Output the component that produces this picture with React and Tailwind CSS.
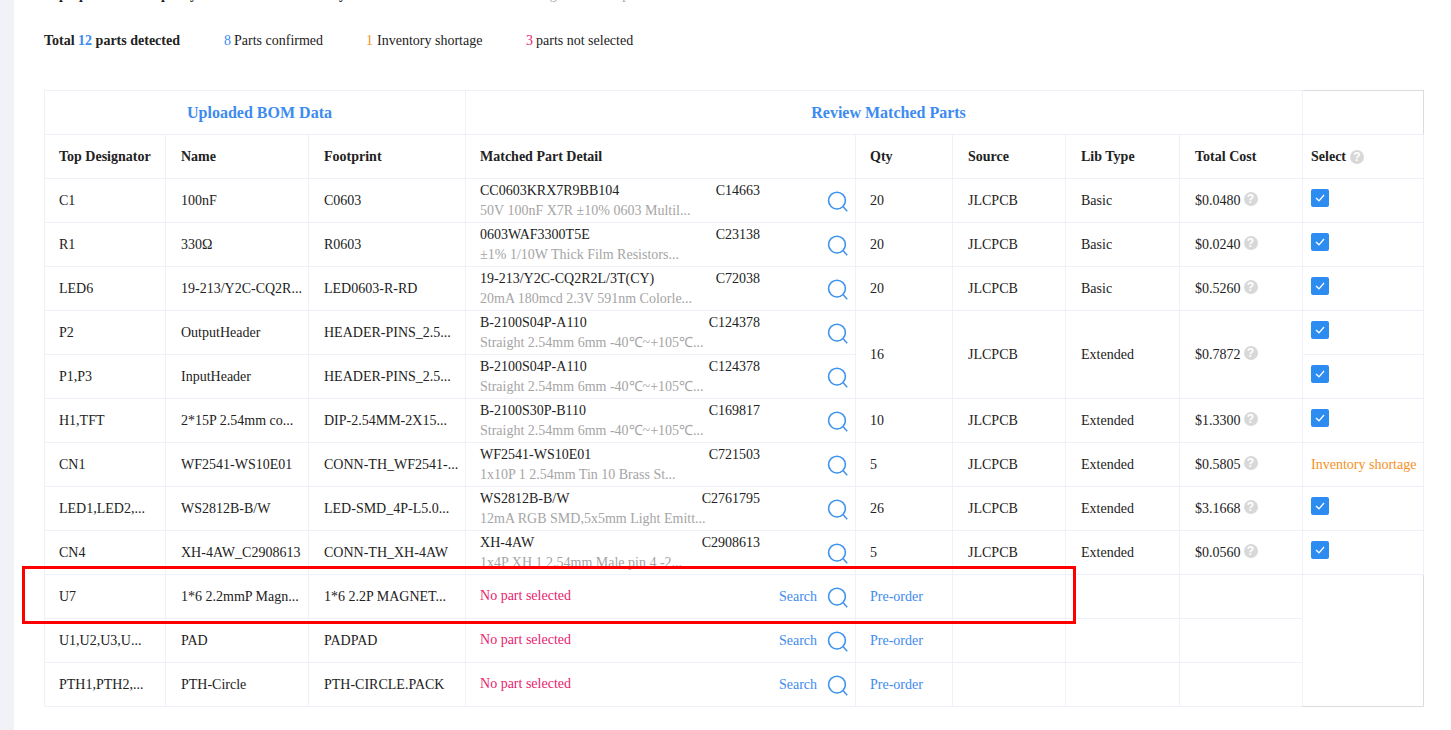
const rows = [
  { d: "C1", n: "100nF", f: "C0603", p: "CC0603KRX7R9BB104", c: "C14663", s: "50V 100nF X7R ±10% 0603 Multil...", q: "20", l: "Basic", t: "$0.0480" },
  { d: "R1", n: "330Ω", f: "R0603", p: "0603WAF3300T5E", c: "C23138", s: "±1% 1/10W Thick Film Resistors...", q: "20", l: "Basic", t: "$0.0240" },
  { d: "LED6", n: "19-213/Y2C-CQ2R...", f: "LED0603-R-RD", p: "19-213/Y2C-CQ2R2L/3T(CY)", c: "C72038", s: "20mA 180mcd 2.3V 591nm Colorle...", q: "20", l: "Basic", t: "$0.5260" },
  { d: "P2", n: "OutputHeader", f: "HEADER-PINS_2.5...", p: "B-2100S04P-A110", c: "C124378", s: "Straight 2.54mm 6mm -40℃~+105℃...", q: "16", l: "Extended", t: "$0.7872", span: 2 },
  { d: "P1,P3", n: "InputHeader", f: "HEADER-PINS_2.5...", p: "B-2100S04P-A110", c: "C124378", s: "Straight 2.54mm 6mm -40℃~+105℃...", skip: true },
  { d: "H1,TFT", n: "2*15P 2.54mm co...", f: "DIP-2.54MM-2X15...", p: "B-2100S30P-B110", c: "C169817", s: "Straight 2.54mm 6mm -40℃~+105℃...", q: "10", l: "Extended", t: "$1.3300" },
  { d: "CN1", n: "WF2541-WS10E01", f: "CONN-TH_WF2541-...", p: "WF2541-WS10E01", c: "C721503", s: "1x10P 1 2.54mm Tin 10 Brass St...", q: "5", l: "Extended", t: "$0.5805", short: true },
  { d: "LED1,LED2,...", n: "WS2812B-B/W", f: "LED-SMD_4P-L5.0...", p: "WS2812B-B/W", c: "C2761795", s: "12mA RGB SMD,5x5mm Light Emitt...", q: "26", l: "Extended", t: "$3.1668" },
  { d: "CN4", n: "XH-4AW_C2908613", f: "CONN-TH_XH-4AW", p: "XH-4AW", c: "C2908613", s: "1x4P XH 1 2.54mm Male pin 4 -2...", q: "5", l: "Extended", t: "$0.0560" },
];

const empty = [
  { d: "U7", n: "1*6 2.2mmP Magn...", f: "1*6 2.2P MAGNET..." },
  { d: "U1,U2,U3,U...", n: "PAD", f: "PADPAD" },
  { d: "PTH1,PTH2,...", n: "PTH-Circle", f: "PTH-CIRCLE.PACK" },
];

const td = "border border-[#eef1fa] pl-[15px] pr-0 align-middle whitespace-nowrap overflow-hidden";
const tdTight = "border border-[#eef1fa] pl-[14px] pr-0 align-middle whitespace-nowrap overflow-hidden";
const th = "border border-[#eef1fa] pl-[15px] pr-0 align-middle text-left font-bold whitespace-nowrap";
const thTight = "border border-[#eef1fa] pl-[14px] pr-0 align-middle text-left font-bold whitespace-nowrap";

function Lens() {
  return (
    <svg width="22" height="22" viewBox="0 0 22 22" fill="none" stroke="#3f94ee" className="block shrink-0">
      <circle cx="10" cy="9.6" r="8.4" strokeWidth="1.6" />
      <path d="M16 15.6 L20.2 20.2" strokeWidth="1.5" />
    </svg>
  );
}

function Help() {
  return (
    <span className="inline-flex h-[14px] w-[14px] items-center justify-center rounded-full bg-[#d8d8d8] font-['Liberation_Sans',sans-serif] text-[12px] leading-none font-bold text-white">
      ?
    </span>
  );
}

function Check() {
  return (
    <span className="flex h-[18px] w-[18px] items-center justify-center rounded-[2px] bg-[#2d8cf0]">
      <svg width="10" height="8" viewBox="0 0 10 8" fill="none" stroke="#fff" strokeWidth="1.3">
        <path d="M1 4 L4 6.8 L9 1" />
      </svg>
    </span>
  );
}

function Cost({ value }) {
  return (
    <div className="flex items-center gap-[3px]">
      <span>{value}</span>
      <span className="-mt-[4px] flex">
        <Help />
      </span>
    </div>
  );
}

export default function App() {
  return (
    <div className="flex h-[730px] w-[1451px] overflow-hidden bg-white font-['Liberation_Serif',serif] text-[14px] text-[#222]">
      <div className="w-[14px] shrink-0 bg-[#f0f2f7]" />
      <main className="relative flex-1 pl-[30px]">
        <div className="-mt-[12px] flex h-[14px] items-center leading-[14px]">
          <span className="font-bold">Top tips: Select the part you want to assemble on your board.</span>
          <span className="ml-[8px] text-[#a5a5a5]">We recommend on using assembled parts for each order now...</span>
        </div>

        <div className="mt-[32px] flex h-[14px] items-center leading-[14px]">
          <span className="w-[180px] font-bold">
            Total <span className="text-[#3d8bf0]">12</span> parts detected
          </span>
          <span className="w-[142px]">
            <span className="mr-[3px] text-[#3d8bf0]">8</span>Parts confirmed
          </span>
          <span className="w-[160px]">
            <span className="mr-[4px] text-[#f5901e]">1</span>Inventory shortage
          </span>
          <span>
            <span className="mr-[3px] text-[#e8246f]">3</span>parts not selected
          </span>
        </div>

        <table className="mt-[42px] w-[1379px] table-fixed border-collapse">
          <colgroup>
            <col className="w-[121px]" />
            <col className="w-[143px]" />
            <col className="w-[157px]" />
            <col className="w-[390px]" />
            <col className="w-[97px]" />
            <col className="w-[113px]" />
            <col className="w-[114px]" />
            <col className="w-[123px]" />
            <col className="w-[121px]" />
          </colgroup>
          <thead>
            <tr className="h-[44px]">
              <th colSpan={3} className="border border-[#eef1fa] pt-[1px] pl-[9px] text-center text-[16px] font-bold text-[#3d8bf0]">
                Uploaded BOM Data
              </th>
              <th colSpan={5} className="border border-[#eef1fa] pt-[1px] pl-[9px] text-center text-[16px] font-bold text-[#3d8bf0]">
                Review Matched Parts
              </th>
              <th className="border border-t-[#dcdcdc] border-r-[#dcdcdc] border-b-[#eef1fa] border-l-[#eef1fa]" />
            </tr>
            <tr className="h-[44px]">
              <th className={thTight}>Top Designator</th>
              <th className={th}>Name</th>
              <th className={th}>Footprint</th>
              <th className={thTight}>Matched Part Detail</th>
              <th className={thTight}>Qty</th>
              <th className={th}>Source</th>
              <th className={th}>Lib Type</th>
              <th className={th}>Total Cost</th>
              <th className="border border-[#eef1fa] pl-[8px] text-left font-bold">
                <span className="flex items-center gap-[4px]">
                  Select
                  <span className="mt-[1px] flex">
                    <Help />
                  </span>
                </span>
              </th>
            </tr>
          </thead>
          <tbody>
            {rows.map((r, i) => (
              <tr key={i} className="h-[44px]">
                <td className={tdTight}>{r.d}</td>
                <td className={td}>{r.n}</td>
                <td className={td}>{r.f}</td>
                <td className={tdTight}>
                  <div className="flex items-center pr-[6px]">
                    <div className="mt-[1px] w-[280px]">
                      <div className="flex justify-between leading-[20px]">
                        <span>{r.p}</span>
                        <span>{r.c}</span>
                      </div>
                      <div className="leading-[20px] text-[#a5a5a5]">{r.s}</div>
                    </div>
                    <span className="ml-auto mt-[2px]">
                      <Lens />
                    </span>
                  </div>
                </td>
                {!r.skip && (
                  <>
                    <td className={tdTight} rowSpan={r.span || 1}>{r.q}</td>
                    <td className={td} rowSpan={r.span || 1}>JLCPCB</td>
                    <td className={td} rowSpan={r.span || 1}>{r.l}</td>
                    <td className={td} rowSpan={r.span || 1}>
                      <Cost value={r.t} />
                    </td>
                  </>
                )}
                <td className="border border-[#eef1fa] pl-[8px] align-middle whitespace-nowrap">
                  {r.short ? (
                    <span className="text-[#f5901e]">Inventory shortage</span>
                  ) : (
                    <span className="-mt-[6px] block">
                      <Check />
                    </span>
                  )}
                </td>
              </tr>
            ))}
            {empty.map((r, i) => (
              <tr key={r.d} className="h-[44px]">
                <td className={tdTight}>{r.d}</td>
                <td className={td}>{r.n}</td>
                <td className={td}>{r.f}</td>
                <td className={tdTight}>
                  <div className="flex items-center pr-[6px]">
                    <span className="-mt-[2px] text-[#e8246f]">No part selected</span>
                    <span className="ml-auto text-[#3d8bf0]">Search</span>
                    <span className="ml-[10px] mt-[2px]">
                      <Lens />
                    </span>
                  </div>
                </td>
                <td className={tdTight}>
                  <span className="text-[#3d8bf0]">Pre-order</span>
                </td>
                <td className={td} />
                <td className={td} />
                <td className={td} />
                {i === 0 && (
                  <td rowSpan={3} className="border border-t-[#eef1fa] border-r-[#dcdcdc] border-b-[#dcdcdc] border-l-[#eef1fa]" />
                )}
              </tr>
            ))}
          </tbody>
        </table>

        <div className="absolute top-[566px] left-[8px] h-[58px] w-[1054px] border-[3px] border-[#ff0000]" />
      </main>
    </div>
  );
}
